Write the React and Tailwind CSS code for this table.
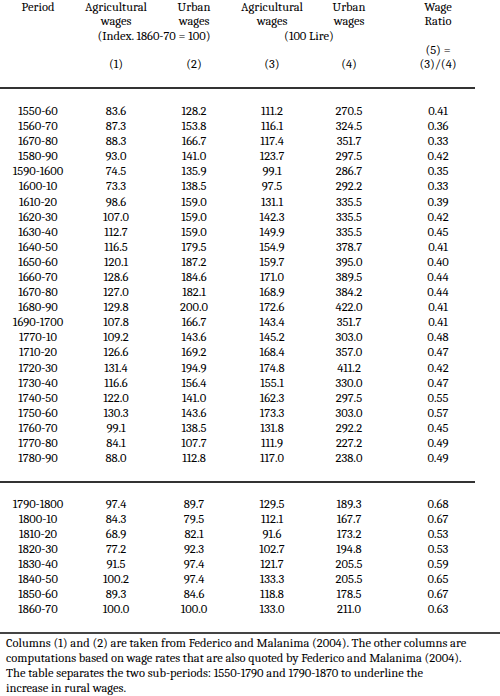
import React from "react";

const firstPeriod = [
  ["1550-60", "83.6", "128.2", "111.2", "270.5", "0.41"],
  ["1560-70", "87.3", "153.8", "116.1", "324.5", "0.36"],
  ["1670-80", "88.3", "166.7", "117.4", "351.7", "0.33"],
  ["1580-90", "93.0", "141.0", "123.7", "297.5", "0.42"],
  ["1590-1600", "74.5", "135.9", "99.1", "286.7", "0.35"],
  ["1600-10", "73.3", "138.5", "97.5", "292.2", "0.33"],
  ["1610-20", "98.6", "159.0", "131.1", "335.5", "0.39"],
  ["1620-30", "107.0", "159.0", "142.3", "335.5", "0.42"],
  ["1630-40", "112.7", "159.0", "149.9", "335.5", "0.45"],
  ["1640-50", "116.5", "179.5", "154.9", "378.7", "0.41"],
  ["1650-60", "120.1", "187.2", "159.7", "395.0", "0.40"],
  ["1660-70", "128.6", "184.6", "171.0", "389.5", "0.44"],
  ["1670-80", "127.0", "182.1", "168.9", "384.2", "0.44"],
  ["1680-90", "129.8", "200.0", "172.6", "422.0", "0.41"],
  ["1690-1700", "107.8", "166.7", "143.4", "351.7", "0.41"],
  ["1770-10", "109.2", "143.6", "145.2", "303.0", "0.48"],
  ["1710-20", "126.6", "169.2", "168.4", "357.0", "0.47"],
  ["1720-30", "131.4", "194.9", "174.8", "411.2", "0.42"],
  ["1730-40", "116.6", "156.4", "155.1", "330.0", "0.47"],
  ["1740-50", "122.0", "141.0", "162.3", "297.5", "0.55"],
  ["1750-60", "130.3", "143.6", "173.3", "303.0", "0.57"],
  ["1760-70", "99.1", "138.5", "131.8", "292.2", "0.45"],
  ["1770-80", "84.1", "107.7", "111.9", "227.2", "0.49"],
  ["1780-90", "88.0", "112.8", "117.0", "238.0", "0.49"],
];

const secondPeriod = [
  ["1790-1800", "97.4", "89.7", "129.5", "189.3", "0.68"],
  ["1800-10", "84.3", "79.5", "112.1", "167.7", "0.67"],
  ["1810-20", "68.9", "82.1", "91.6", "173.2", "0.53"],
  ["1820-30", "77.2", "92.3", "102.7", "194.8", "0.53"],
  ["1830-40", "91.5", "97.4", "121.7", "205.5", "0.59"],
  ["1840-50", "100.2", "97.4", "133.3", "205.5", "0.65"],
  ["1850-60", "89.3", "84.6", "118.8", "178.5", "0.67"],
  ["1860-70", "100.0", "100.0", "133.0", "211.0", "0.63"],
];

const cols = "grid grid-cols-[76px_80px_76px_80px_74px_104px]";

const Rows = ({ rows }) => (
  <div className="flex flex-col">
    {rows.map((row, i) => (
      <div key={i} className={`${cols} h-[15.1px] leading-[15.1px] text-center`}>
        {row.map((cell, j) => (
          <span key={j}>{cell}</span>
        ))}
      </div>
    ))}
  </div>
);

const App = () => {
  return (
    <div className="font-serif w-[500px] h-[696px] overflow-hidden bg-white text-black text-[12.5px] flex flex-col">
      {/* Header */}
      <div className={`${cols} grid-rows-[repeat(5,14.3px)] leading-[14.3px] text-center`}>
        <div className="col-start-1 row-start-1">Period</div>
        <div className="col-start-2 row-start-1 row-span-2">
          Agricultural
          <br />
          wages
        </div>
        <div className="col-start-3 row-start-1 row-span-2">
          Urban
          <br />
          wages
        </div>
        <div className="col-start-2 col-span-2 row-start-3">(Index. 1860-70 = 100)</div>
        <div className="col-start-4 row-start-1 row-span-2">
          Agricultural
          <br />
          wages
        </div>
        <div className="col-start-5 row-start-1 row-span-2">
          Urban
          <br />
          wages
        </div>
        <div className="col-start-4 col-span-2 row-start-3">(100 Lire)</div>
        <div className="col-start-6 row-start-1 row-span-2">
          Wage
          <br />
          Ratio
        </div>
        <div className="col-start-6 row-start-4">(5) =</div>
        <div className="col-start-2 row-start-5">(1)</div>
        <div className="col-start-3 row-start-5">(2)</div>
        <div className="col-start-4 row-start-5">(3)</div>
        <div className="col-start-5 row-start-5">(4)</div>
        <div className="col-start-6 row-start-5">(3)/(4)</div>
      </div>

      <div className="mt-[16px] h-[2px] w-[475px] bg-[#333]" />

      <div className="mt-[15px]">
        <Rows rows={firstPeriod} />
      </div>

      <div className="mt-[15px] h-[2px] w-[475px] bg-[#333]" />

      <div className="mt-[14px]">
        <Rows rows={secondPeriod} />
      </div>

      <div className="mt-[15px] h-[2px] w-full bg-[#444]" />

      {/* Footnote */}
      <p className="px-[6px] pt-[2px] leading-[15px] whitespace-nowrap">
        Columns (1) and (2) are taken from Federico and Malanima (2004). The other columns are
        <br />
        computations based on wage rates that are also quoted by Federico and Malanima (2004).
        <br />
        The table separates the two sub-periods: 1550-1790 and 1790-1870 to underline the
        <br />
        increase in rural wages.
      </p>
    </div>
  );
};

export default App;
